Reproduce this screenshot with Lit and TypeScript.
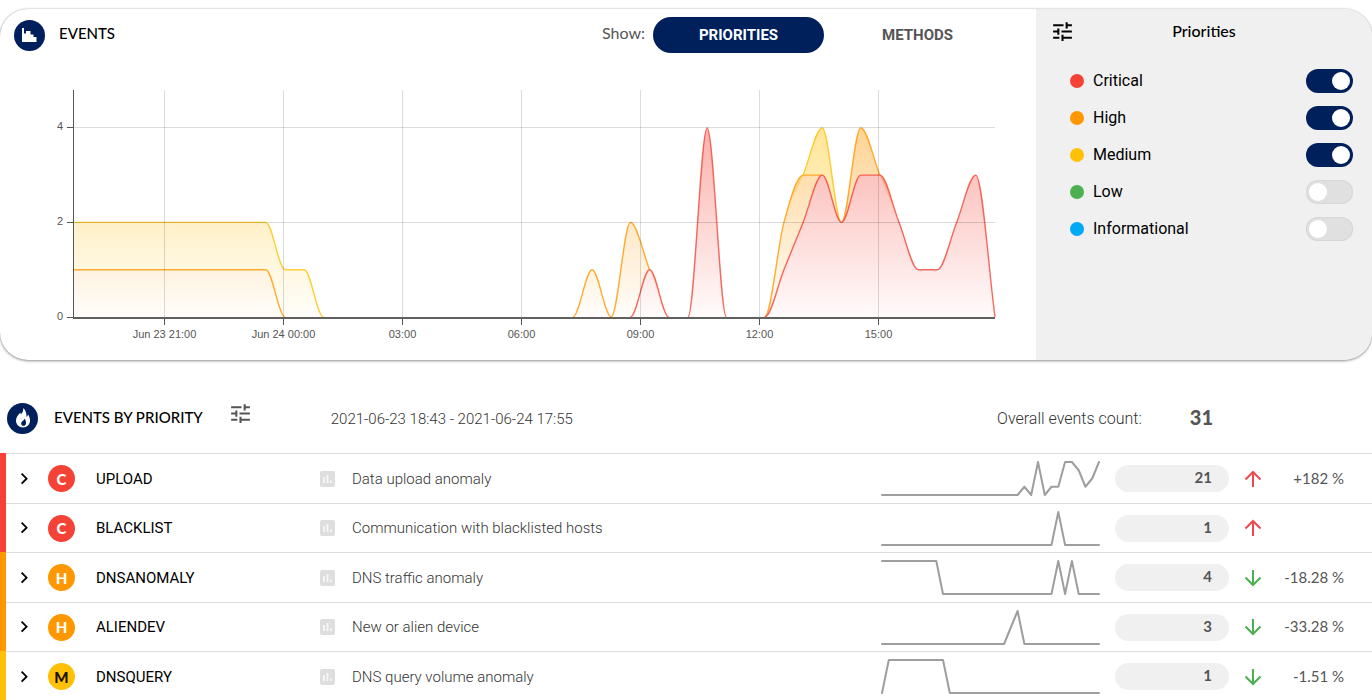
import { LitElement, html, svg, css, nothing } from "lit";
import { customElement, property, state } from "lit/decorators.js";
import { classMap } from "lit/directives/class-map.js";

type Level = "critical" | "high" | "medium" | "low" | "info";

interface EventRow {
  name: string;
  level: Level;
  text: string;
  count: number;
  up: boolean;
  change: string;
  trend: number[];
}

const zeros = (n: number): number[] => new Array(n).fill(0);
const ones = (n: number): number[] => new Array(n).fill(1);

const EVENTS: EventRow[] = [
  { name: "UPLOAD", level: "critical", text: "Data upload anomaly", count: 21, up: true, change: "+182 %",
    trend: [...zeros(21), 1, 0, 4, 0, 1, 1, 4, 4, 3, 1, 2, 4] },
  { name: "BLACKLIST", level: "critical", text: "Communication with blacklisted hosts", count: 1, up: true, change: "",
    trend: [...zeros(26), 1, ...zeros(6)] },
  { name: "DNSANOMALY", level: "high", text: "DNS traffic anomaly", count: 4, up: false, change: "-18.28 %",
    trend: [...ones(9), ...zeros(17), 1, 0, 1, ...zeros(4)] },
  { name: "ALIENDEV", level: "high", text: "New or alien device", count: 3, up: false, change: "-33.28 %",
    trend: [...zeros(19), 1, 2, ...zeros(12)] },
  { name: "DNSQUERY", level: "medium", text: "DNS query volume anomaly", count: 1, up: false, change: "-1.51 %",
    trend: [0, ...ones(9), ...zeros(23)] },
];

const PRIORITIES: { level: Level; label: string; on: boolean }[] = [
  { level: "critical", label: "Critical", on: true },
  { level: "high", label: "High", on: true },
  { level: "medium", label: "Medium", on: true },
  { level: "low", label: "Low", on: false },
  { level: "info", label: "Informational", on: false },
];

/* Event counts per 29 minute bucket, each series by itself. */
const at = (pairs: Record<number, number>): number[] =>
  Array.from({ length: 49 }, (_, i) => pairs[i] ?? 0);
const CRITICAL = at({ 30: 1, 33: 4, 37: 1, 38: 2, 39: 3, 40: 2, 41: 3, 42: 3, 43: 2, 44: 1, 45: 1, 46: 2, 47: 3 });
const HIGH = at({ 0: 1, 1: 1, 2: 1, 3: 1, 4: 1, 5: 1, 6: 1, 7: 1, 8: 1, 9: 1, 10: 1, 27: 1, 29: 2, 37: 1, 38: 1, 41: 1 });
const MEDIUM = at({ 0: 1, 1: 1, 2: 1, 3: 1, 4: 1, 5: 1, 6: 1, 7: 1, 8: 1, 9: 1, 10: 1, 11: 1, 12: 1, 39: 1 });

const tuneIcon = html`<svg viewBox="0 0 24 24" width="25" height="25" fill="currentColor" aria-hidden="true">
  <path d="M3 17v2h6v-2H3zM3 5v2h10V5H3zm10 16v-2h8v-2h-8v-2h-2v6h2zM7 9v2H3v2h4v2h2V9H7zm14 4v-2H11v2h10zm-6-4h2V7h4V5h-4V3h-2v6z" />
</svg>`;

type Point = [number, number];

/* Monotone cubic segments; segment i joins point i to point i + 1. */
function monotone(points: Point[]): string[] {
  const n = points.length;
  const slope: number[] = [];
  for (let i = 0; i < n - 1; i++) {
    slope.push((points[i + 1][1] - points[i][1]) / (points[i + 1][0] - points[i][0]));
  }
  const tangent = points.map((_, i) => {
    if (i === 0) return slope[0];
    if (i === n - 1) return slope[n - 2];
    const a = slope[i - 1];
    const b = slope[i];
    if (a * b <= 0) return 0;
    return Math.sign(a) * Math.min(2 * Math.abs(a), 2 * Math.abs(b), Math.abs(a + b) / 2);
  });
  return slope.map((_, i) => {
    const [x0, y0] = points[i];
    const [x1, y1] = points[i + 1];
    const d = (x1 - x0) / 3;
    return `C${x0 + d},${y0 + tangent[i] * d} ${x1 - d},${y1 - tangent[i + 1] * d} ${x1},${y1}`;
  });
}

@customElement("events-chart")
export class EventsChart extends LitElement {
  @state() private width = 1036;
  @property({ attribute: false }) visible: Level[] = [];
  private observer?: ResizeObserver;

  static styles = css`
    :host { display: block; height: 270px; }
    svg { display: block; width: 100%; height: 100%; }
    .grid { stroke: #000; stroke-opacity: 0.14; stroke-width: 1; }
    .axis { stroke: #555; stroke-width: 1; fill: none; }
    .base { stroke: #606060; stroke-width: 2; }
    text { font: 11px "Liberation Sans", Arial, sans-serif; fill: #555; }
    .line { fill: none; stroke-width: 1.4; stroke-opacity: 0.8; }
    .critical { stroke: #f44336; }
    .high { stroke: #ff9800; }
    .medium { stroke: #ffc107; }
  `;

  connectedCallback() {
    super.connectedCallback();
    this.observer = new ResizeObserver((entries) => {
      this.width = Math.round(entries[0].contentRect.width);
    });
    this.observer.observe(this);
  }

  disconnectedCallback() {
    this.observer?.disconnect();
    super.disconnectedCallback();
  }

  render() {
    const left = 74;
    const right = this.width - 41;
    const base = 235;
    const unit = (base - 8) / 4.8;
    const hour = (right - left) / 23.24;
    const x = (i: number) => left + ((right - left) * i) / 48;
    const y = (v: number) => base - unit * v;
    const line = (v: number) => Math.floor(y(v)) + 0.5;
    const series = [
      { level: "critical" as Level, color: "#f44336", data: CRITICAL },
      { level: "high" as Level, color: "#ff9800", data: HIGH },
      { level: "medium" as Level, color: "#ffc107", data: MEDIUM },
    ].filter((s) => this.visible.includes(s.level));
    let below = zeros(49);
    const layers = series.map((s) => {
      const total = below.map((v, i) => v + s.data[i]);
      const top: Point[] = total.map((v, i) => [x(i), y(v)]);
      const bottom: Point[] = below.map((v, i) => [x(i), y(v)]);
      const segments = monotone(top);
      const under = monotone([...bottom].reverse());
      const stroke = segments
        .map((seg, i) => (s.data[i] || s.data[i + 1] ? `M${top[i][0]},${top[i][1]}${seg}` : ""))
        .join("");
      const area = `M${top[0][0]},${top[0][1]}${segments.join("")}L${bottom[48][0]},${bottom[48][1]}${under.join("")}Z`;
      below = total;
      return { ...s, stroke, area };
    });
    const ticks = ["Jun 23 21:00", "Jun 24 00:00", "03:00", "06:00", "09:00", "12:00", "15:00"];
    const tickX = (i: number) => Math.floor(left + hour * (2.29 + 3 * i)) + 0.5;
    return html`<svg role="img" aria-label="Events over time">
      <defs>
        ${layers.map((l) => svg`<linearGradient id=${l.level} gradientUnits="userSpaceOnUse" x1="0" y1=${y(4)} x2="0" y2=${base}>
          <stop offset="0" stop-color=${l.color} stop-opacity="0.42"></stop>
          <stop offset="1" stop-color=${l.color} stop-opacity="0.02"></stop>
        </linearGradient>`)}
      </defs>
      ${[...layers].reverse().map((l) => svg`
        <path d=${l.area} fill="url(#${l.level})"></path>
        <path class="line ${l.level}" d=${l.stroke}></path>`)}
      ${[2, 4].map((v) => svg`<path class="grid" d="M${left} ${line(v)}H${right}"></path>`)}
      ${ticks.map((t, i) => svg`
        <path class="grid" d="M${tickX(i)} 8V${base}"></path>
        <path class="axis" d="M${tickX(i)} ${base}v8"></path>
        <text x=${tickX(i)} y="256" text-anchor="middle">${t}</text>`)}
      ${[0, 2, 4].map((v) => svg`
        <path class="axis" d="M67 ${line(v)}H${left}"></path>
        <text x="63" y=${Math.floor(y(v)) + 3} text-anchor="end">${v}</text>`)}
      <path class="axis" d="M73.5 8V${base}"></path>
      <path class="base" d="M73 ${base + 1}H${right}"></path>
    </svg>`;
  }
}

@customElement("app-root")
export class AppRoot extends LitElement {
  @state() private tab = "PRIORITIES";
  @state() private enabled: Level[] = PRIORITIES.filter((p) => p.on).map((p) => p.level);

  static styles = css`
    * { box-sizing: border-box; }
    :host {
      display: block;
      height: 100vh;
      overflow: hidden;
      padding-top: 9px;
      background: #fff;
      color: #555;
      font: 15px/20px Roboto, sans-serif;
    }
    button { border: 0; margin: 0; padding: 0; background: none; color: inherit; font: inherit; cursor: pointer; }
    svg { display: block; }
    h2, h3 { margin: 0; font: 500 15px/20px Lato, sans-serif; color: #000; }

    .card {
      display: grid;
      grid-template-columns: minmax(0, 1fr) 336px;
      border-radius: 28px;
      overflow: hidden;
      box-shadow: 0 0 2px rgba(0, 0, 0, 0.2), 0 1px 3px rgba(0, 0, 0, 0.4);
    }
    .card-head { display: flex; align-items: center; height: 52px; padding: 0 33px 0 14px; }
    .badge {
      display: grid;
      place-items: center;
      width: 31px;
      height: 31px;
      border-radius: 50%;
      background: #00205b;
      color: #fff;
    }
    .card-head h2 { flex: 1; margin-left: 14px; padding-bottom: 4px; }
    .show { margin-right: 8px; padding-bottom: 4px; font: 16px/20px Lato, sans-serif; }
    .tabs { display: flex; gap: 8px; }
    .tab { width: 171px; height: 36px; border-radius: 18px; font-weight: 700; }
    .tab.active { background: #00205b; color: #fff; }
    .plot { padding: 21px 0 8px; }

    .side { background: #f0f0f0; color: #000; }
    .side-head { display: grid; grid-template-columns: 25px 1fr 25px; align-items: center; height: 44px; padding: 0 14px; }
    .side-head h3 { font-size: 16px; text-align: center; }
    .levels { margin: 9px 0 0; padding: 0 19px 0 34px; list-style: none; }
    .levels li { display: flex; align-items: center; height: 37px; }
    .levels label { flex: 1; font-size: 16px; }
    .dot { width: 14px; height: 14px; margin-right: 9px; border-radius: 50%; }
    .switch {
      appearance: none;
      display: flex;
      align-items: center;
      width: 47px;
      height: 24px;
      margin: 0;
      padding: 0 3px;
      border-radius: 12px;
      background: #e0e0e0;
      box-shadow: inset 0 0 0 1px #d6d6d6;
      cursor: pointer;
    }
    .switch::before { content: ""; width: 18px; height: 18px; border-radius: 50%; background: #fff; }
    .switch:checked { justify-content: flex-end; background: #00205b; box-shadow: none; }

    .critical { background: #f44336; }
    .high { background: #ff9800; }
    .medium { background: #ffc107; }
    .low { background: #4caf50; }
    .info { background: #03a9f4; }

    .list-head { display: flex; align-items: center; height: 70px; margin-top: 23px; padding: 0 159px 0 7px; }
    .list-head h2 { margin: 0 25px 0 16px; padding-bottom: 2px; }
    .list-head button { margin-bottom: 10px; }
    .range, .overall, .c-text { color: #333; font-weight: 300; }
    .range, .overall { padding-top: 2px; }
    .range { flex: 1; margin-left: 78px; }
    .overall { margin-right: 48px; font-size: 16px; }
    .total { padding-bottom: 2px; font: 900 20px/20px Lato, sans-serif; }

    table { width: 100%; border-spacing: 0; table-layout: fixed; }
    td { height: 50px; padding: 0; border-top: 1px solid #dcdcdc; }
    tr:nth-child(even) td { height: 49px; }
    td.strip { width: 6px; border-top-width: 0; }
    .c-open { width: 42px; }
    .c-level { width: 48px; }
    .c-name { width: 224px; color: #000; }
    .c-kind { width: 32px; }
    .c-trend { width: 234px; }
    .c-count { width: 114px; }
    .c-arrow { width: 48px; }
    .c-change { width: 95px; padding: 0 28px 2px 0; text-align: right; font: 15px/20px Lato, sans-serif; }
    .open { display: block; margin-left: 7px; color: #000; }
    .letter {
      display: grid;
      place-items: center;
      width: 27px;
      height: 27px;
      border-radius: 50%;
      color: #fff;
      font: 900 15px/20px Lato, sans-serif;
    }
    .letter.medium { color: #1a1000; }
    .count {
      display: block;
      height: 27px;
      padding-right: 17px;
      border-radius: 14px;
      background: #f0f0f0;
      text-align: right;
      font: 700 15px/25px Lato, sans-serif;
    }
    .arrow { margin: 0 auto; color: #4caf50; }
    .arrow.up { color: #f0484e; }
    .spark { fill: none; stroke: #9e9e9e; stroke-width: 2; stroke-linejoin: round; stroke-linecap: round; }
  `;

  private toggle(level: Level) {
    this.enabled = this.enabled.includes(level)
      ? this.enabled.filter((l) => l !== level)
      : [...this.enabled, level];
  }

  private spark(values: number[]) {
    const max = Math.max(...values);
    const points = values.map((v, i) => `${(1 + (i * 217) / 32).toFixed(1)},${34 - (v / max) * 33}`).join(" ");
    return html`<svg width="219" height="35" aria-hidden="true"><polyline class="spark" points=${points} /></svg>`;
  }

  private row(e: EventRow) {
    return html`<tr>
      <td class="strip ${e.level}"></td>
      <td class="c-open">
        <button class="open" aria-label="Expand ${e.name}">
          <svg width="24" height="24" viewBox="0 0 24 24" fill="none" stroke="currentColor" stroke-width="1.8">
            <path d="M8.600 6.700l5 5-5 5" />
          </svg>
        </button>
      </td>
      <td class="c-level"><span class="letter ${e.level}">${e.level[0].toUpperCase()}</span></td>
      <td class="c-name">${e.name}</td>
      <td class="c-kind">
        <svg width="15" height="16" viewBox="0 0 15 16" aria-hidden="true">
          <rect width="15" height="16" rx="2" fill="#dedede" />
          <path d="M4 6v6M7.500 4v8M11 9.500V12" stroke="#f7f7f7" stroke-width="1.8" />
        </svg>
      </td>
      <td class="c-text">${e.text}</td>
      <td class="c-trend">${this.spark(e.trend)}</td>
      <td class="c-count"><span class="count">${e.count}</span></td>
      <td class="c-arrow">
        <svg class=${classMap({ arrow: true, up: e.up })} width="18" height="18" viewBox="0 0 18 18" fill="none" stroke="currentColor" stroke-width="2" role="img" aria-label=${e.up ? "Up" : "Down"}>
          <path d=${e.up ? "M9 17V2M1.5 9.5L9 2l7.5 7.5" : "M9 1v15M1.5 8.5L9 16l7.5-7.5"} />
        </svg>
      </td>
      <td class="c-change">${e.change || nothing}</td>
    </tr>`;
  }

  render() {
    return html`
      <section class="card">
        <div class="main">
          <header class="card-head">
            <span class="badge">
              <svg width="15" height="14" viewBox="0 0 15 14" fill="currentColor" aria-hidden="true">
                <path d="M0 0h2v5.500h2V3h4.500v3.500h3V9H14.500v5H0z" />
              </svg>
            </span>
            <h2>EVENTS</h2>
            <span class="show">Show:</span>
            <div class="tabs">
              ${["PRIORITIES", "METHODS"].map((t) => html`<button
                class=${classMap({ tab: true, active: this.tab === t })}
                aria-pressed=${this.tab === t}
                @click=${() => (this.tab = t)}>${t}</button>`)}
            </div>
          </header>
          <div class="plot"><events-chart .visible=${this.enabled}></events-chart></div>
        </div>
        <aside class="side">
          <div class="side-head">
            <button aria-label="Filter priorities">${tuneIcon}</button>
            <h3>Priorities</h3>
          </div>
          <ul class="levels">
            ${PRIORITIES.map((p) => html`<li>
              <span class="dot ${p.level}"></span>
              <label for=${p.level}>${p.label}</label>
              <input class="switch" type="checkbox" role="switch" id=${p.level}
                .checked=${this.enabled.includes(p.level)} @change=${() => this.toggle(p.level)} />
            </li>`)}
          </ul>
        </aside>
      </section>

      <section>
        <header class="list-head">
          <span class="badge">
            <svg width="16" height="20" viewBox="0 0 16 20" aria-hidden="true">
              <path fill="currentColor" d="M8.200 0c.4 3.200-.8 4.600-2.200 6.400-.4-.7-.5-1.300-.5-2C3 6.500 1 9.500 1 12.500 1 16.500 4 19.500 8 19.500s7-3 7-7c0-2.500-.8-4.300-2-6-.2 1.200-.7 2-1.500 2.500C11.600 5.400 10.700 2 8.200 0z" />
              <path fill="#00205b" d="M9.500 10.500c.3 1.700-3.300 2.700-3.300 4.900 0 1.400 1 2.400 2.300 2.400 1.500 0 2.500-1.100 2.500-2.600 0-1.700-.3-3.300-1.500-4.700z" />
            </svg>
          </span>
          <h2>EVENTS BY PRIORITY</h2>
          <button aria-label="Filter events">${tuneIcon}</button>
          <span class="range">2021-06-23 18:43 - 2021-06-24 17:55</span>
          <span class="overall">Overall events count:</span>
          <span class="total">31</span>
        </header>
        <table aria-label="Events by priority">
          <tbody>${EVENTS.map((e) => this.row(e))}</tbody>
        </table>
      </section>
    `;
  }
}
